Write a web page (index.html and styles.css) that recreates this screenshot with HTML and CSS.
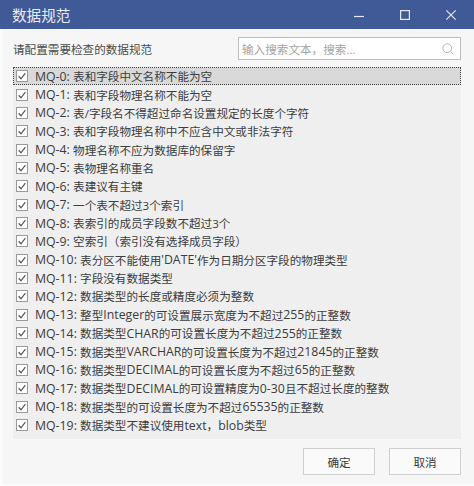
FILE: index.html
```html
<!DOCTYPE html>
<html lang="zh">
<head>
<meta charset="utf-8">
<title>数据规范</title>
<link rel="stylesheet" href="styles.css">
</head>
<body>
<div class="window">
  <header class="titlebar">
    <span class="title">数据规范</span>
    <div class="controls">
      <svg class="ctl" viewBox="0 0 10 10"><path d="M0 6.5h10"/></svg>
      <svg class="ctl" viewBox="0 0 10 10"><rect x=".6" y=".6" width="8.8" height="8.8"/></svg>
      <svg class="ctl" viewBox="0 0 10 10"><path d="M.3 .3l9.4 9.4M9.7 .3L.3 9.7"/></svg>
    </div>
  </header>
  <main class="body">
    <div class="toolbar">
      <span class="prompt">请配置需要检查的数据规范</span>
      <div class="search">
        <span class="placeholder">输入搜索文本，搜索...</span>
        <svg class="search-icon" viewBox="0 0 12 12"><circle cx="5.2" cy="5.2" r="4.4"/><path d="M8.4 8.4l2.8 2.8"/></svg>
      </div>
    </div>
    <ul class="list">
      <li class="row focus"><span class="check"><svg viewBox="0 0 12 12"><path d="M2 6.3l2.8 3L10 2.5"/></svg></span><span class="lat">MQ-0: </span>表和字段中文名称不能为空</li>
      <li class="row"><span class="check"><svg viewBox="0 0 12 12"><path d="M2 6.3l2.8 3L10 2.5"/></svg></span><span class="lat">MQ-1: </span>表和字段物理名称不能为空</li>
      <li class="row"><span class="check"><svg viewBox="0 0 12 12"><path d="M2 6.3l2.8 3L10 2.5"/></svg></span><span class="lat">MQ-2: </span>表/字段名不得超过命名设置规定的长度个字符</li>
      <li class="row"><span class="check"><svg viewBox="0 0 12 12"><path d="M2 6.3l2.8 3L10 2.5"/></svg></span><span class="lat">MQ-3: </span>表和字段物理名称中不应含中文或非法字符</li>
      <li class="row"><span class="check"><svg viewBox="0 0 12 12"><path d="M2 6.3l2.8 3L10 2.5"/></svg></span><span class="lat">MQ-4: </span>物理名称不应为数据库的保留字</li>
      <li class="row"><span class="check"><svg viewBox="0 0 12 12"><path d="M2 6.3l2.8 3L10 2.5"/></svg></span><span class="lat">MQ-5: </span>表物理名称重名</li>
      <li class="row"><span class="check"><svg viewBox="0 0 12 12"><path d="M2 6.3l2.8 3L10 2.5"/></svg></span><span class="lat">MQ-6: </span>表建议有主键</li>
      <li class="row"><span class="check"><svg viewBox="0 0 12 12"><path d="M2 6.3l2.8 3L10 2.5"/></svg></span><span class="lat">MQ-7: </span>一个表不超过3个索引</li>
      <li class="row"><span class="check"><svg viewBox="0 0 12 12"><path d="M2 6.3l2.8 3L10 2.5"/></svg></span><span class="lat">MQ-8: </span>表索引的成员字段数不超过3个</li>
      <li class="row"><span class="check"><svg viewBox="0 0 12 12"><path d="M2 6.3l2.8 3L10 2.5"/></svg></span><span class="lat">MQ-9: </span>空索引（索引没有选择成员字段）</li>
      <li class="row"><span class="check"><svg viewBox="0 0 12 12"><path d="M2 6.3l2.8 3L10 2.5"/></svg></span><span class="lat">MQ-10: </span>表分区不能使用<span class="lat">'DATE'</span>作为日期分区字段的物理类型</li>
      <li class="row"><span class="check"><svg viewBox="0 0 12 12"><path d="M2 6.3l2.8 3L10 2.5"/></svg></span><span class="lat">MQ-11: </span>字段没有数据类型</li>
      <li class="row"><span class="check"><svg viewBox="0 0 12 12"><path d="M2 6.3l2.8 3L10 2.5"/></svg></span><span class="lat">MQ-12: </span>数据类型的长度或精度必须为整数</li>
      <li class="row"><span class="check"><svg viewBox="0 0 12 12"><path d="M2 6.3l2.8 3L10 2.5"/></svg></span><span class="lat">MQ-13: </span>整型<span class="lat">Integer</span>的可设置展示宽度为不超过<span class="lat">255</span>的正整数</li>
      <li class="row"><span class="check"><svg viewBox="0 0 12 12"><path d="M2 6.3l2.8 3L10 2.5"/></svg></span><span class="lat">MQ-14: </span>数据类型<span class="lat">CHAR</span>的可设置长度为不超过<span class="lat">255</span>的正整数</li>
      <li class="row"><span class="check"><svg viewBox="0 0 12 12"><path d="M2 6.3l2.8 3L10 2.5"/></svg></span><span class="lat">MQ-15: </span>数据类型<span class="lat">VARCHAR</span>的可设置长度为不超过<span class="lat">21845</span>的正整数</li>
      <li class="row"><span class="check"><svg viewBox="0 0 12 12"><path d="M2 6.3l2.8 3L10 2.5"/></svg></span><span class="lat">MQ-16: </span>数据类型<span class="lat">DECIMAL</span>的可设置长度为不超过<span class="lat">65</span>的正整数</li>
      <li class="row"><span class="check"><svg viewBox="0 0 12 12"><path d="M2 6.3l2.8 3L10 2.5"/></svg></span><span class="lat">MQ-17: </span>数据类型<span class="lat">DECIMAL</span>的可设置精度为<span class="lat">0-30</span>且不超过长度的整数</li>
      <li class="row"><span class="check"><svg viewBox="0 0 12 12"><path d="M2 6.3l2.8 3L10 2.5"/></svg></span><span class="lat">MQ-18: </span>数据类型的可设置长度为不超过<span class="lat">65535</span>的正整数</li>
      <li class="row"><span class="check"><svg viewBox="0 0 12 12"><path d="M2 6.3l2.8 3L10 2.5"/></svg></span><span class="lat">MQ-19: </span>数据类型不建议使用<span class="lat">text</span>，<span class="lat">blob</span>类型</li>
    </ul>
    <div class="actions">
      <button class="btn" type="button">确定</button>
      <button class="btn" type="button">取消</button>
    </div>
  </main>
</div>
</body>
</html>
```
FILE: styles.css
```css
* { box-sizing: border-box; }
html, body { margin: 0; padding: 0; }
body {
  width: 474px;
  height: 486px;
  overflow: hidden;
  background: #fbfbfb;
  font-family: "Open Sans", "Noto Sans CJK SC", sans-serif;
  font-size: 11.6px;
  color: #3c3c3c;
  text-spacing-trim: space-all;
}
.window { display: flex; flex-direction: column; height: 486px; padding-bottom: 2px; }
.titlebar {
  height: 29px;
  flex: none;
  background: #3f5a97;
  display: flex;
  align-items: center;
  justify-content: space-between;
  padding-left: 12px;
}
.title { color: #e8ecf4; font-size: 14.6px; }
.controls { display: flex; gap: 36px; padding-right: 18px; align-items: center; }
.ctl { width: 10px; height: 10px; fill: none; stroke: #e4e8f2; stroke-width: 1.2; overflow: visible; }
.body {
  flex: 1;
  background: #f6f6f6;
  margin-left: 3px;
  padding: 8px 13px 0 10px;
  display: flex;
  flex-direction: column;
}
.toolbar { display: flex; justify-content: space-between; align-items: center; height: 23px; }
.prompt { color: #4a4a4a; }
.search {
  width: 223px;
  height: 23px;
  background: #fff;
  border: 1px solid #bdbdbd;
  display: flex;
  align-items: center;
  justify-content: space-between;
  padding: 0 6px 0 3px;
}
.placeholder { color: #a3a3a3; }
.search-icon { width: 12px; height: 12px; fill: none; stroke: #b5b5b5; stroke-width: 1; }
.list {
  list-style: none;
  margin: 7px 0 0;
  padding: 0;
  height: 372px;
  background: #efefef;
}
.row {
  height: 18.37px;
  display: flex;
  align-items: center;
  padding-left: 3px;
  white-space: pre;
}
.row.focus {
  background: #d9d9d9;
  outline: 1px dotted #444;
  outline-offset: -1px;
}
.lat { font-size: 12.3px; }
.check {
  width: 12px;
  height: 12px;
  margin-right: 7px;
  flex: none;
  background: #fff;
  border: 1px solid #999;
  display: flex;
}
.check svg { width: 10px; height: 10px; fill: none; stroke: #555; stroke-width: 1.4; }
.actions { display: flex; justify-content: flex-end; gap: 14px; margin-top: 9px; }
.btn {
  width: 72px;
  height: 27px;
  background: #fafafa;
  border: 1px solid #cfcfcf;
  font: inherit;
  color: #3c3c3c;
  padding: 0;
}
```
